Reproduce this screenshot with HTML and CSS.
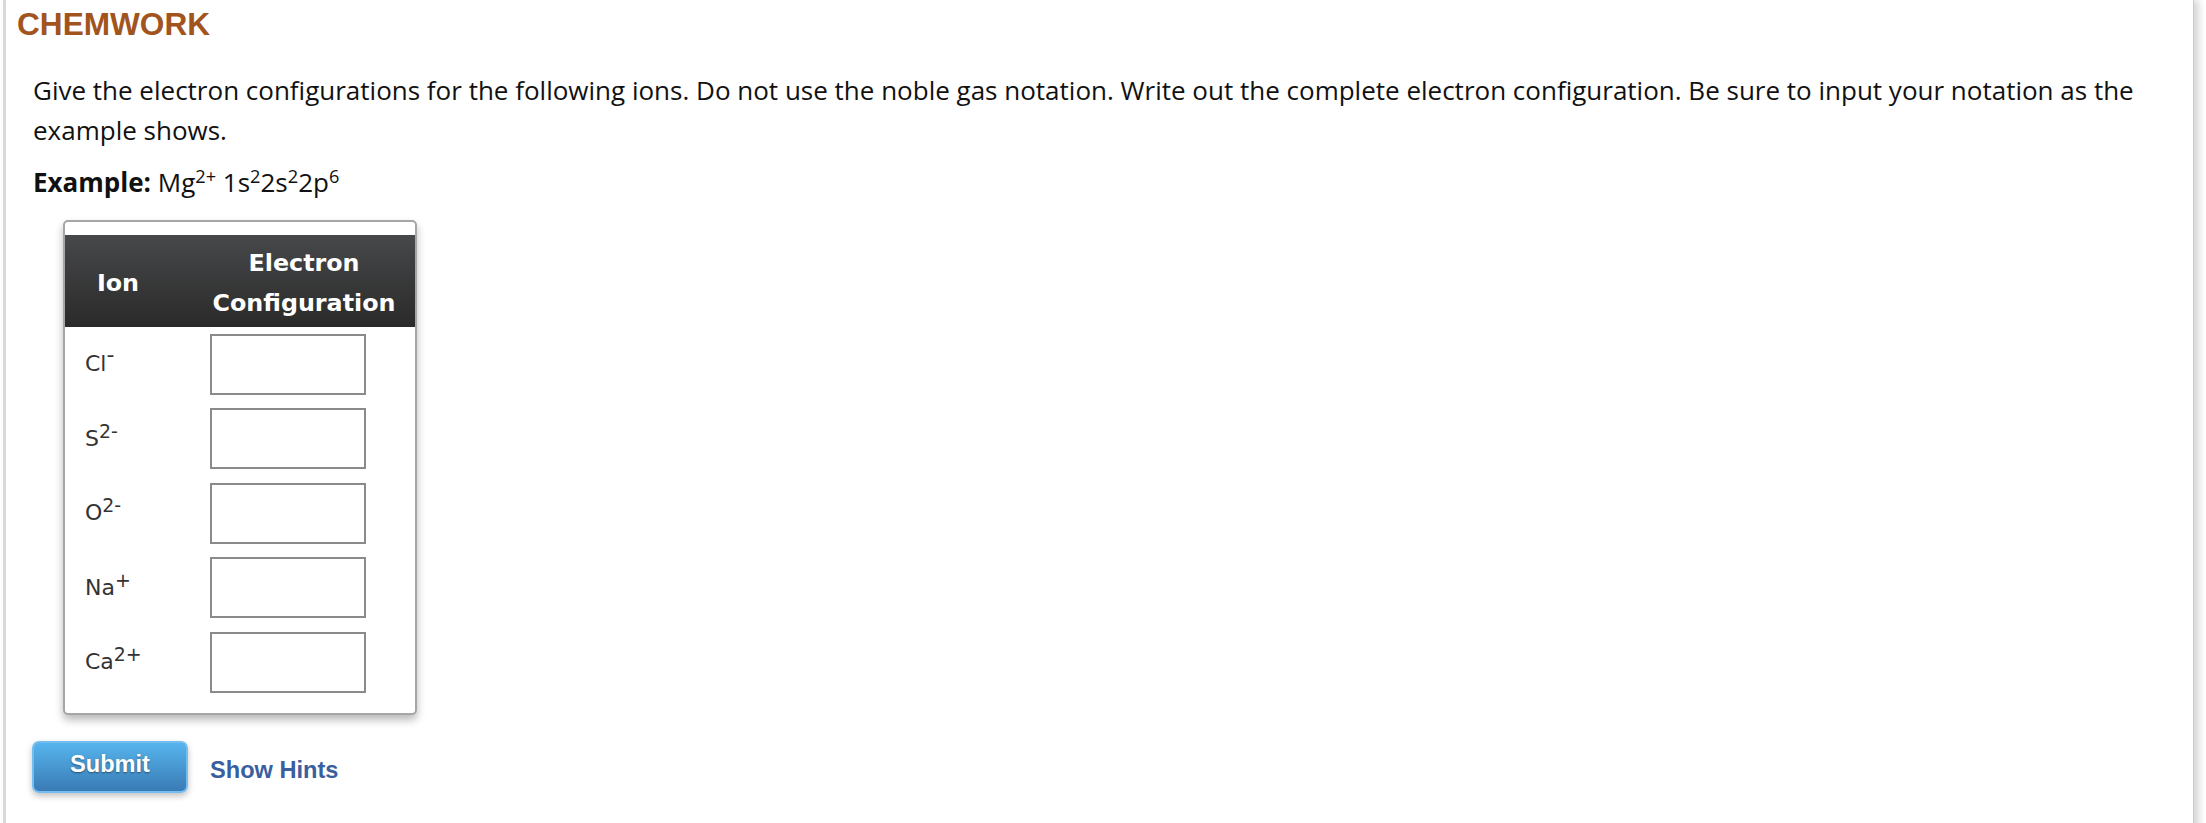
FILE: index.html
```html
<!DOCTYPE html>
<html>
<head>
<meta charset="utf-8">
<title>CHEMWORK</title>
<link rel="stylesheet" href="styles.css">
</head>
<body>
<div class="panel">
  <h1 class="title">CHEMWORK</h1>
  <p class="prompt">Give the electron configurations for the following ions. Do not use the noble gas notation. Write out the complete electron configuration. Be sure to input your notation as the example shows.</p>
  <p class="example"><b>Example:</b> Mg<sup>2+</sup> 1s<sup>2</sup>2s<sup>2</sup>2p<sup>6</sup></p>

  <div class="card">
    <div class="card-head">
      <div class="head-ion">Ion</div>
      <div class="head-config">Electron<br>Configuration</div>
    </div>
    <div class="card-body">
      <div class="row"><div class="ion">Cl<sup class="minus">-</sup></div><input class="answer" type="text"></div>
      <div class="row"><div class="ion">S<sup>2-</sup></div><input class="answer" type="text"></div>
      <div class="row"><div class="ion">O<sup>2-</sup></div><input class="answer" type="text"></div>
      <div class="row"><div class="ion">Na<sup>+</sup></div><input class="answer" type="text"></div>
      <div class="row"><div class="ion">Ca<sup>2+</sup></div><input class="answer" type="text"></div>
    </div>
  </div>

  <div class="actions">
    <button class="submit" type="button">Submit</button>
    <a class="hints" href="#">Show Hints</a>
  </div>
</div>
</body>
</html>
```

FILE: styles.css
```css
html, body {
  margin: 0;
  padding: 0;
  background: #ffffff;
}

body {
  font-family: "Open Sans", "Liberation Sans", sans-serif;
  color: #111111;
}

.panel {
  box-sizing: border-box;
  margin-left: 3px;
  width: 2191px;
  min-height: 823px;
  border-left: 3px solid #d9d9d9;
  border-right: 1px solid #cacaca;
  box-shadow: 5px 0 7px rgba(0, 0, 0, 0.16);
  background: #ffffff;
  padding: 6px 16px 40px 27px;
}

.title {
  margin: 0 0 0 -16px;
  font-family: "Liberation Sans", Arial, sans-serif;
  font-weight: bold;
  font-size: 31.6px;
  line-height: 36px;
  color: #a2541e;
}

.prompt {
  margin: 28px 0 0 0;
  font-size: 26px;
  line-height: 40px;
}

.example {
  margin: 12px 0 0 0;
  font-size: 26px;
  line-height: 40px;
}

.example b {
  font-weight: 700;
}

sup {
  font-size: 0.7em;
  line-height: 0;
  vertical-align: 0.5em;
}

.card {
  box-sizing: border-box;
  margin: 18px 0 0 30px;
  width: 354px;
  border: 2px solid #a6a6a6;
  border-radius: 5px;
  padding: 13px 0 13px 0;
  box-shadow: 0 5px 8px rgba(0, 0, 0, 0.28);
  background: #ffffff;
}

.card-head {
  display: grid;
  grid-template-columns: 106px 1fr;
  align-items: center;
  height: 92px;
  background: linear-gradient(#47484a, #2a2a2a);
  color: #ffffff;
  font-family: "DejaVu Sans", Verdana, sans-serif;
  font-weight: bold;
  font-size: 23.8px;
  line-height: 40px;
}

.head-ion {
  text-align: center;
  padding-top: 4px;
}

.head-config {
  text-align: center;
  padding-left: 22px;
  padding-top: 4px;
}

.card-body {
  display: flex;
  flex-direction: column;
}

.row {
  display: grid;
  grid-template-columns: 145px auto;
  align-items: center;
  height: 74.5px;
}

.ion {
  padding-left: 20px;
  font-family: "DejaVu Sans", Verdana, sans-serif;
  font-size: 22px;
  color: #333333;
  line-height: 30px;
}

.ion sup {
  font-size: 0.86em;
  vertical-align: 0.42em;
}

.ion sup.minus {
  font-size: 1em;
  vertical-align: 0.4em;
}

.answer {
  box-sizing: border-box;
  width: 156px;
  height: 61px;
  margin: 0;
  border: 2px solid #8a8a8a;
  border-radius: 0;
  background: #ffffff;
  padding: 0 6px;
  font-size: 20px;
}

.actions {
  display: flex;
  align-items: center;
  margin: 26px 0 0 -1px;
}

.submit {
  box-sizing: border-box;
  width: 156px;
  height: 52px;
  border: 2px solid #74bdf0;
  border-radius: 7px;
  background: linear-gradient(#56b4ec, #3a7bb6);
  box-shadow: 0 3px 6px rgba(0, 0, 0, 0.25);
  color: #ffffff;
  font-family: "Liberation Sans", Arial, sans-serif;
  font-weight: bold;
  font-size: 23.6px;
  text-shadow: 0 1px 2px rgba(0, 0, 0, 0.45);
  padding: 0 0 4px 0;
  cursor: pointer;
}

.hints {
  margin-left: 22px;
  padding-top: 8px;
  font-family: "Liberation Sans", Arial, sans-serif;
  font-weight: bold;
  font-size: 23.6px;
  color: #3a5f9f;
  text-decoration: none;
}
```
